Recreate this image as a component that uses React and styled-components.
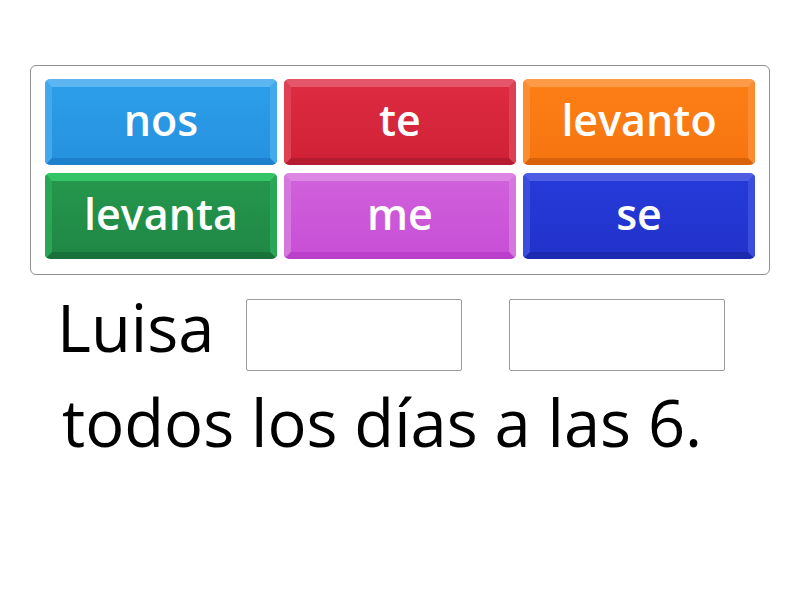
import React from "react";
import styled, { createGlobalStyle } from "styled-components";

//styles
const GlobalStyle = createGlobalStyle`
    body {
        margin: 0;
        background: #ffffff;
        font-family: "Open Sans", "Liberation Sans", sans-serif;
    }
`;

const Page = styled.div`
    width: 800px;
    height: 600px;
    padding-top: 65px;
    box-sizing: border-box;
    background: #ffffff;
`;

const Panel = styled.div`
    margin-left: 30px;
    width: 740px;
    height: 210px;
    box-sizing: border-box;
    border: 1px solid #8f8f8f;
    border-radius: 6px;
    padding: 13px 14px;
    display: grid;
    grid-template-columns: repeat(3, 232px);
    grid-template-rows: repeat(2, 86px);
    column-gap: 7px;
    row-gap: 8px;
`;

const Tile = styled.div`
    box-sizing: border-box;
    display: flex;
    align-items: center;
    justify-content: center;
    border-style: solid;
    border-width: 8px 7px 7px 7px;
    border-color: ${(p) => p.$top} ${(p) => p.$side} ${(p) => p.$bottom} ${(p) => p.$side};
    border-radius: 5px;
    background: linear-gradient(180deg, ${(p) => p.$face} 0%, ${(p) => p.$faceEnd} 100%);
    color: #ffffff;
    font-size: 43px;
    font-weight: 600;
    line-height: 1;
    padding-bottom: 6px;
`;

const Sentence = styled.div`
    margin-top: 5px;
    padding-left: 57px;
    font-size: 65px;
    line-height: 95px;
    color: #000000;
`;

const Blank = styled.span`
    display: inline-block;
    vertical-align: middle;
    box-sizing: border-box;
    width: 216px;
    height: 72px;
    margin-left: ${(p) => p.$gap}px;
    border: 1px solid #9a9a9a;
    border-radius: 2px;
    background: #ffffff;
`;

const Tail = styled.span`
    display: inline-block;
    margin-left: 5px;
`;

const tiles = [
    { word: "nos", top: "#5cb6f1", side: "#42a9ed", bottom: "#1d80cc", face: "#2c9ee9", faceEnd: "#2692df" },
    { word: "te", top: "#e5566a", side: "#e04054", bottom: "#b51c2f", face: "#dd2b40", faceEnd: "#d02237" },
    { word: "levanto", top: "#fd9b49", side: "#fd8b30", bottom: "#d8630b", face: "#fd7e15", faceEnd: "#f67511" },
    { word: "levanta", top: "#33c565", side: "#29a656", bottom: "#19723a", face: "#25964c", faceEnd: "#1f8845" },
    { word: "me", top: "#dc87e4", side: "#d577df", bottom: "#ba3fca", face: "#d060db", faceEnd: "#c850d6" },
    { word: "se", top: "#4d5ee3", side: "#3b4ddd", bottom: "#1b2aae", face: "#253ad8", faceEnd: "#2233cb" },
];

//page component
const App = () => {
    return (
        <Page>
            <GlobalStyle />
            <Panel>
                {tiles.map((t) => (
                    <Tile
                        key={t.word}
                        $top={t.top}
                        $side={t.side}
                        $bottom={t.bottom}
                        $face={t.face}
                        $faceEnd={t.faceEnd}>
                        {t.word}
                    </Tile>
                ))}
            </Panel>
            <Sentence>
                Luisa
                <Blank $gap={32} />
                <Blank $gap={47} /> <Tail>todos los días a las 6.</Tail>
            </Sentence>
        </Page>
    );
};

export default App;
